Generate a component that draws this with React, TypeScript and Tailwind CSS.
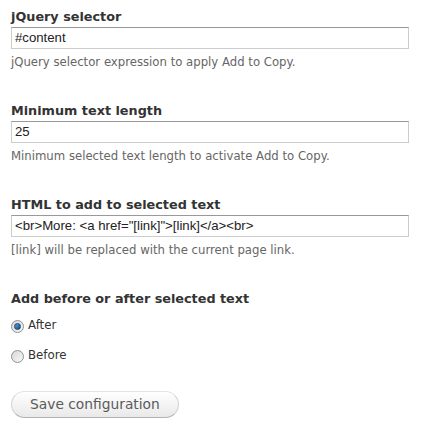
import React from "react";

const sans = "font-['DejaVu_Sans',Verdana,sans-serif]";
const arial = "font-['Liberation_Sans',Arial,sans-serif]";

function TextField({ label, value, help }: { label: string; value: string; help: string }) {
  return (
    <div className="mb-[33px]">
      <label className={`block ${sans} font-bold text-[12.8px] leading-[16px] text-[#333] mb-[2px]`}>{label}</label>
      <div
        className={`h-[22px] w-[398px] border border-[#ccc] border-t-[#999] bg-white px-[3px] ${arial} text-[13.2px] leading-[20px] text-[#222] whitespace-nowrap`}
      >
        {value}
      </div>
      <div className={`mt-[5px] ${sans} text-[11.7px] leading-[16px] text-[#666]`}>{help}</div>
    </div>
  );
}

function Radio({ checked, label }: { checked?: boolean; label: string }) {
  return (
    <div className="flex items-center h-[20px] mb-[10px]">
      <span className="w-[13px] h-[13px] rounded-full border border-[#8f8f8f] bg-gradient-to-br from-[#d8d8d8] to-[#f8f8f8] flex items-center justify-center shrink-0">
        {checked && (
          <span className="w-[7px] h-[7px] rounded-full bg-gradient-to-br from-[#5aa3e0] to-[#0d4f8c] border border-[#1c3f66]" />
        )}
      </span>
      <span className={`ml-[4px] ${sans} text-[11.8px] text-[#333]`}>{label}</span>
    </div>
  );
}

export default function App() {
  return (
    <div className="bg-white w-[423px] h-[430px] pl-[11px] pt-[9px]">
      <TextField label="jQuery selector" value="#content" help="jQuery selector expression to apply Add to Copy." />
      <TextField label="Minimum text length" value="25" help="Minimum selected text length to activate Add to Copy." />
      <TextField
        label="HTML to add to selected text"
        value={'<br>More: <a href="[link]">[link]</a><br>'}
        help="[link] will be replaced with the current page link."
      />
      <div className={`${sans} font-bold text-[12.8px] leading-[16px] text-[#333] mb-[9px]`}>Add before or after selected text</div>
      <div>
        <Radio checked label="After" />
        <Radio label="Before" />
      </div>
      <button
        className={`mt-[15px] h-[27px] px-[18px] rounded-[20px] border border-[#e4e4e4] border-b-[#b4b4b4] border-x-[#d2d2d2] bg-gradient-to-b from-white to-[#e9e9e9] ${sans} text-[13.8px] text-[#5a5a5a]`}
      >
        Save configuration
      </button>
    </div>
  );
}
